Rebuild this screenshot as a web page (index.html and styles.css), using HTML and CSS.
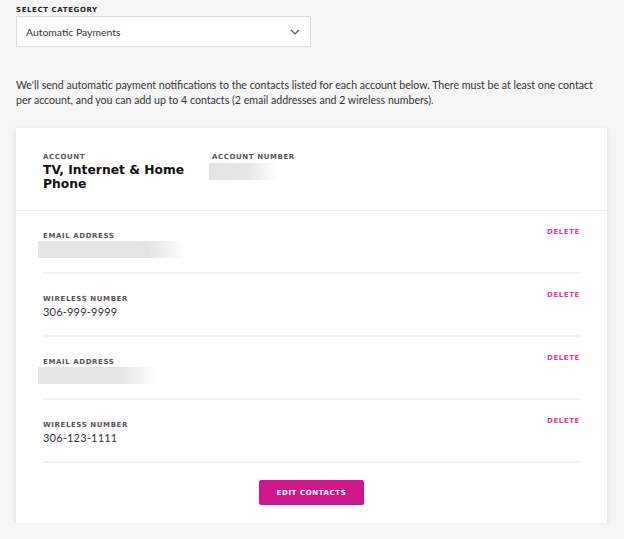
FILE: index.html
```html
<!DOCTYPE html>
<html>
<head>
<meta charset="utf-8">
<link rel="stylesheet" href="styles.css">
</head>
<body>
<div class="page">
  <div class="field-label">SELECT CATEGORY</div>
  <div class="select">
    <span class="select-text">Automatic Payments</span>
    <svg class="chev" width="10" height="6" viewBox="0 0 10 6"><path d="M1 1 L5 5 L9 1" fill="none" stroke="#555" stroke-width="1.2"/></svg>
  </div>
  <p class="intro">We'll send automatic payment notifications to the contacts listed for each account below. There must be at least one contact per account, and you can add up to 4 contacts (2 email addresses and 2 wireless numbers).</p>
  <div class="card">
    <div class="card-head">
      <div class="col-account">
        <div class="label">ACCOUNT</div>
        <div class="title">TV, Internet &amp; Home Phone</div>
      </div>
      <div class="col-number">
        <div class="label">ACCOUNT NUMBER</div>
        <div class="blur blur-acct"></div>
      </div>
    </div>
    <div class="rows">
      <div class="row">
        <div class="row-main">
          <div class="label">EMAIL ADDRESS</div>
          <div class="blur blur-email1"></div>
        </div>
        <a class="delete">DELETE</a>
      </div>
      <div class="row">
        <div class="row-main">
          <div class="label">WIRELESS NUMBER</div>
          <div class="value">306-999-9999</div>
        </div>
        <a class="delete">DELETE</a>
      </div>
      <div class="row">
        <div class="row-main">
          <div class="label">EMAIL ADDRESS</div>
          <div class="blur blur-email2"></div>
        </div>
        <a class="delete">DELETE</a>
      </div>
      <div class="row">
        <div class="row-main">
          <div class="label">WIRELESS NUMBER</div>
          <div class="value">306-123-1111</div>
        </div>
        <a class="delete">DELETE</a>
      </div>
    </div>
    <div class="actions">
      <button class="btn">EDIT CONTACTS</button>
    </div>
  </div>
</div>
</body>
</html>
```
FILE: styles.css
```css
html, body {
  margin: 0;
  padding: 0;
  background: #f6f6f6;
}
.page {
  padding: 5px 17px 0 16px;
  font-family: Lato, "Open Sans", sans-serif;
  color: #333;
}
.field-label, .label, .delete, .btn {
  font-family: "DejaVu Sans", Verdana, sans-serif;
  font-weight: bold;
  font-size: 7px;
  letter-spacing: 0.6px;
  line-height: 10px;
}
.field-label {
  color: #222;
  margin-bottom: 1px;
}
.select {
  width: 295px;
  height: 31px;
  box-sizing: border-box;
  border: 1px solid #dcdcdc;
  background: #fff;
  display: flex;
  align-items: center;
  justify-content: space-between;
  padding: 0 10px 0 9px;
}
.select-text {
  font-size: 10.4px;
  color: #333;
}
.intro {
  margin: 31px 0 0;
  font-size: 10.6px;
  line-height: 15px;
  color: #333;
}
.card {
  margin-top: 20px;
  width: 591px;
  background: #fff;
  box-shadow: 0 1px 5px rgba(0,0,0,0.12);
}
.card-head {
  display: flex;
  padding: 24px 27px 19px;
  border-bottom: 1px solid #eee;
}
.col-account {
  width: 169px;
}
.label {
  color: #555;
}
.title {
  font-family: "DejaVu Sans", sans-serif;
  font-weight: bold;
  font-size: 12.3px;
  line-height: 14px;
  color: #111;
  max-width: 150px;
  margin-top: 1px;
}
.blur {
  height: 17px;
  margin-left: -5px;
}
.blur-acct {
  width: 68px;
  margin-left: -3px;
  margin-top: 1px;
  background: linear-gradient(to right, #e3e3e3 0%, #e6e6e6 55%, #fff 100%);
}
.blur-email1 {
  width: 147px;
  background: linear-gradient(to right, #e6e6e6 0%, #e4e4e4 75%, #fff 100%);
}
.blur-email2 {
  width: 117px;
  background: linear-gradient(to right, #e6e6e6 0%, #e4e4e4 70%, #fff 100%);
}
.rows {
  padding: 0 27px;
}
.row {
  display: flex;
  justify-content: space-between;
  align-items: flex-start;
  height: 63px;
  box-sizing: border-box;
  padding-top: 20px;
  border-bottom: 2px solid #f2f2f2;
}
.value {
  font-size: 11px;
  letter-spacing: 0.2px;
  line-height: 16px;
  color: #333;
}
.delete {
  color: #e03c9e;
  margin-top: -4px;
  cursor: pointer;
}
.actions {
  display: flex;
  justify-content: center;
  padding: 17px 0 18px;
}
.btn {
  width: 105px;
  height: 25px;
  border: none;
  border-radius: 2px;
  background: #d0168c;
  color: #fff;
  padding: 0;
}
```
